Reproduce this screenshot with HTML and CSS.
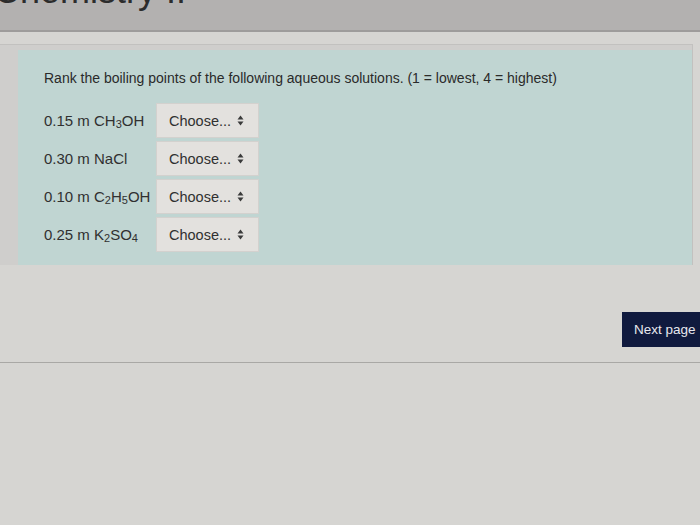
FILE: index.html
```html
<!DOCTYPE html>
<html lang="en">
<head>
  <meta charset="UTF-8">
  <title>Chemistry II</title>
  <link rel="stylesheet" href="styles.css">
</head>
<body>
  <header class="page-header">
    <h1>Chemistry II</h1>
  </header>

  <div class="que">
    <div class="formulation">
      <p class="qtext">Rank the boiling points of the following aqueous solutions. (1 = lowest, 4 = highest)</p>

      <div class="answers">
        <div class="row">
          <span class="label">0.15 m CH<sub>3</sub>OH</span>
          <div class="select">Choose... <svg width="7" height="11" viewBox="0 0 7 11"><path d="M3.5 0.5 L6.5 4.5 H0.5 Z M3.5 10.5 L6.5 6.5 H0.5 Z" fill="#3a3a3a"/></svg></div>
        </div>
        <div class="row">
          <span class="label">0.30 m NaCl</span>
          <div class="select">Choose... <svg width="7" height="11" viewBox="0 0 7 11"><path d="M3.5 0.5 L6.5 4.5 H0.5 Z M3.5 10.5 L6.5 6.5 H0.5 Z" fill="#3a3a3a"/></svg></div>
        </div>
        <div class="row">
          <span class="label">0.10 m C<sub>2</sub>H<sub>5</sub>OH</span>
          <div class="select">Choose... <svg width="7" height="11" viewBox="0 0 7 11"><path d="M3.5 0.5 L6.5 4.5 H0.5 Z M3.5 10.5 L6.5 6.5 H0.5 Z" fill="#3a3a3a"/></svg></div>
        </div>
        <div class="row">
          <span class="label">0.25 m K<sub>2</sub>SO<sub>4</sub></span>
          <div class="select">Choose... <svg width="7" height="11" viewBox="0 0 7 11"><path d="M3.5 0.5 L6.5 4.5 H0.5 Z M3.5 10.5 L6.5 6.5 H0.5 Z" fill="#3a3a3a"/></svg></div>
        </div>
      </div>
    </div>
  </div>

  <div class="submitbtns">
    <button type="button">Next page</button>
  </div>

  <hr class="divider">
</body>
</html>
```

FILE: styles.css
```css
html, body {
  height: 100%;
}
body {
  margin: 0;
  overflow: hidden;
  background-color: #d6d5d2;
  font-family: "Liberation Sans", Arial, sans-serif;
  color: #333;
}
.page-header {
  height: 30px;
  overflow: hidden;
  background-color: #b3b1b0;
  border-bottom: 2px solid #9e9c9b;
}
.page-header h1 {
  margin: -27px 0 0 -6px;
  font-size: 36px;
  line-height: 36px;
  font-weight: normal;
  color: #2c2c2c;
}
.que {
  margin: 12px 7px 0 0;
  padding: 5px 0 0 0;
  background-color: #cfcecc;
  border: 1px solid #c2c1bf;
  border-bottom: none;
  border-left: none;
}
.formulation {
  margin-left: 18px;
  height: 215px;
  padding: 20px 26px 0 26px;
  background-color: #c0d5d2;
  box-sizing: border-box;
}
.qtext {
  margin: 0 0 17px 0;
  font-size: 14px;
  color: #2a2a2a;
}
.answers {
  display: flex;
  flex-direction: column;
  gap: 3px;
}
.row {
  display: flex;
  align-items: center;
}
.label {
  width: 112px;
  font-size: 15px;
  color: #303030;
}
.label sub {
  font-size: 11px;
  vertical-align: -2px;
  line-height: 0;
}
.select {
  display: flex;
  align-items: center;
  justify-content: space-between;
  width: 103px;
  height: 35px;
  padding: 0 14px 0 12px;
  box-sizing: border-box;
  background-color: #e3e1de;
  border: 1px solid #d3d1ce;
  font-size: 14.5px;
  color: #303030;
}
.submitbtns {
  display: flex;
  justify-content: flex-end;
  margin-top: 47px;
}
button {
  margin-right: -10px;
  width: 88px;
  height: 35px;
  padding: 0 0 0 12px;
  background-color: #101a3e;
  color: #e8e8ee;
  border: none;
  font-family: "Liberation Sans", Arial, sans-serif;
  font-size: 13.5px;
  text-align: left;
}
.divider {
  margin: 15px 0 0 0;
  border: none;
  border-top: 1px solid #a9a8a5;
}
```
